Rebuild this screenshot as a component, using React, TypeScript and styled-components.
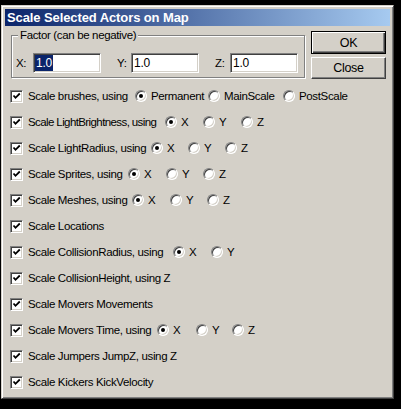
import React from "react"
import styled, { createGlobalStyle } from "styled-components"

const GlobalStyle = createGlobalStyle`
  html, body {
    margin: 0;
    padding: 0;
    background: #000;
  }
  body {
    width: 401px;
    height: 409px;
    overflow: hidden;
    font-family: "Liberation Sans", Arial, sans-serif;
    font-size: 11.5px;
    letter-spacing: -0.35px;
    color: #000;
  }
`

interface RowData {
  label: string
  labelWidth?: number
  spacing?: number
  options?: { text: string; width: number }[]
}

const xyz = (a: number, b: number) => [
  { text: "X", width: a },
  { text: "Y", width: b },
  { text: "Z", width: 30 },
]

const rows: RowData[] = [
  {
    label: "Scale brushes, using",
    labelWidth: 107,
    options: [
      { text: "Permanent", width: 73 },
      { text: "MainScale", width: 75 },
      { text: "PostScale", width: 70 },
    ],
  },
  // Arial is wider than the original font on this one
  { label: "Scale LightBrightness, using", labelWidth: 137, spacing: -0.6, options: xyz(38, 38) },
  { label: "Scale LightRadius, using", labelWidth: 123, options: xyz(37, 37) },
  { label: "Scale Sprites, using", labelWidth: 100, options: xyz(38, 37) },
  { label: "Scale Meshes, using", labelWidth: 104, options: xyz(38, 37) },
  { label: "Scale Locations" },
  {
    label: "Scale CollisionRadius, using",
    labelWidth: 145,
    options: [
      { text: "X", width: 38 },
      { text: "Y", width: 30 },
    ],
  },
  { label: "Scale CollisionHeight, using Z" },
  { label: "Scale Movers Movements" },
  { label: "Scale Movers Time, using", labelWidth: 129, options: xyz(39, 36) },
  { label: "Scale Jumpers JumpZ, using Z" },
  { label: "Scale Kickers KickVelocity" },
]

export default function App() {
  return (
    <>
      <GlobalStyle />
      <Window>
        <TitleBar>Scale Selected Actors on Map</TitleBar>
        <TopSection>
          <GroupBox>
            <Caption>Factor (can be negative)</Caption>
            <Field>
              <FieldLabel $width={17}>X:</FieldLabel>
              <Edit>
                <Selected>1.0</Selected>
              </Edit>
            </Field>
            <Field>
              <FieldLabel $width={14}>Y:</FieldLabel>
              <Edit>1.0</Edit>
            </Field>
            <Field>
              <FieldLabel $width={15}>Z:</FieldLabel>
              <Edit>1.0</Edit>
            </Field>
          </GroupBox>
          <Buttons>
            <Button $default>OK</Button>
            <Button>Close</Button>
          </Buttons>
        </TopSection>
        <RowList>
          {rows.map((row) => (
            <Row key={row.label}>
              <CheckBox>
                <svg width="9" height="9" viewBox="0 0 9 9">
                  <path d="M1.5 3.5 L3.5 5.8 L7.8 1.5" fill="none" stroke="#000" strokeWidth="1.8" />
                </svg>
              </CheckBox>
              <RowLabel $width={row.labelWidth} $spacing={row.spacing}>
                {row.label}
              </RowLabel>
              {row.options?.map((opt, i) => (
                <RadioOption key={opt.text} $width={opt.width}>
                  <Radio $checked={i === 0} />
                  <span>{opt.text}</span>
                </RadioOption>
              ))}
            </Row>
          ))}
        </RowList>
      </Window>
    </>
  )
}

const Window = styled.div`
  box-sizing: border-box;
  margin: 5px 0 0 1px;
  width: 393px;
  height: 394px;
  background: #d4d0c8;
  border: 1px solid;
  border-color: #d4d0c8 #404040 #404040 #d4d0c8;
  box-shadow: inset 1px 1px 0 #fff, inset -1px -1px 0 #808080;
  padding: 3px;
  display: flex;
  flex-direction: column;
`

const TitleBar = styled.div`
  height: 17px;
  flex: none;
  display: flex;
  align-items: center;
  padding-left: 2px;
  background: linear-gradient(to right, #0a246a, #a6caf0);
  color: #fff;
  font-weight: bold;
  font-size: 13px;
  letter-spacing: -0.1px;
`

const TopSection = styled.div`
  display: flex;
  align-items: flex-start;
`

const GroupBox = styled.div`
  position: relative;
  box-sizing: border-box;
  margin: 9px 0 0 6px;
  width: 294px;
  height: 43px;
  border: 1px solid #808080;
  box-shadow: inset 1px 1px 0 #fff, 1px 1px 0 #fff;
  padding: 12px 0 0 4px;
  display: flex;
  gap: 16px;
`

const Caption = styled.span`
  position: absolute;
  top: -7px;
  left: 6px;
  padding: 0 2px;
  line-height: 13px;
  background: #d4d0c8;
`

const Field = styled.div`
  display: flex;
  align-items: center;
`

const FieldLabel = styled.span<{ $width: number }>`
  width: ${(p) => p.$width}px;
`

const Edit = styled.div`
  box-sizing: border-box;
  width: 68px;
  height: 20px;
  background: #fff;
  border: 1px solid;
  border-color: #808080 #fff #fff #808080;
  box-shadow: inset 1px 1px 0 #404040, inset -1px -1px 0 #d4d0c8;
  padding: 0 0 0 2px;
  display: flex;
  align-items: center;
  font-size: 12px;
  letter-spacing: -0.2px;
`

const Selected = styled.span`
  background: #0a246a;
  color: #fff;
  padding: 1px 1px;
  margin-left: -1px;
`

const Buttons = styled.div`
  margin: 5px 0 0 6px;
  display: flex;
  flex-direction: column;
  gap: 3px;
`

const Button = styled.div<{ $default?: boolean }>`
  box-sizing: border-box;
  width: 75px;
  height: ${(p) => (p.$default ? 23 : 22)}px;
  display: flex;
  align-items: center;
  justify-content: center;
  font-size: 12.5px;
  letter-spacing: -0.3px;
  background: #d4d0c8;
  border: 1px solid;
  border-color: ${(p) => (p.$default ? "#000" : "#fff #404040 #404040 #fff")};
  box-shadow: ${(p) =>
    p.$default
      ? "inset 1px 1px 0 #fff, inset -1px -1px 0 #404040, inset -2px -2px 0 #808080"
      : "inset -1px -1px 0 #808080, inset 1px 1px 0 #d4d0c8"};
`

const RowList = styled.div`
  margin-top: 4px;
  display: flex;
  flex-direction: column;
`

const Row = styled.div`
  height: 26px;
  display: flex;
  align-items: center;
  padding-left: 5px;
`

const CheckBox = styled.div`
  box-sizing: border-box;
  flex: none;
  width: 13px;
  height: 13px;
  margin-right: 5px;
  background: #fff;
  border: 1px solid;
  border-color: #808080 #fff #fff #808080;
  box-shadow: inset 1px 1px 0 #404040, inset -1px -1px 0 #d4d0c8;
  display: flex;
  align-items: center;
  justify-content: center;
`

const RowLabel = styled.span<{ $width?: number; $spacing?: number }>`
  flex: none;
  width: ${(p) => (p.$width ? `${p.$width}px` : "auto")};
  white-space: nowrap;
  ${(p) => (p.$spacing !== undefined ? `letter-spacing: ${p.$spacing}px;` : "")}
`

const RadioOption = styled.div<{ $width: number }>`
  flex: none;
  width: ${(p) => p.$width}px;
  display: flex;
  align-items: center;
  gap: 4px;
`

const Radio = styled.span<{ $checked?: boolean }>`
  box-sizing: border-box;
  flex: none;
  width: 12px;
  height: 12px;
  border-radius: 50%;
  background: #fff;
  border: 1px solid;
  border-color: #808080 #fff #fff #808080;
  box-shadow: inset 1px 1px 0 #404040, inset -1px -1px 0 #d4d0c8;
  display: flex;
  align-items: center;
  justify-content: center;

  &::after {
    content: "";
    width: 4px;
    height: 4px;
    border-radius: 50%;
    background: #000;
    display: ${(p) => (p.$checked ? "block" : "none")};
  }
`
